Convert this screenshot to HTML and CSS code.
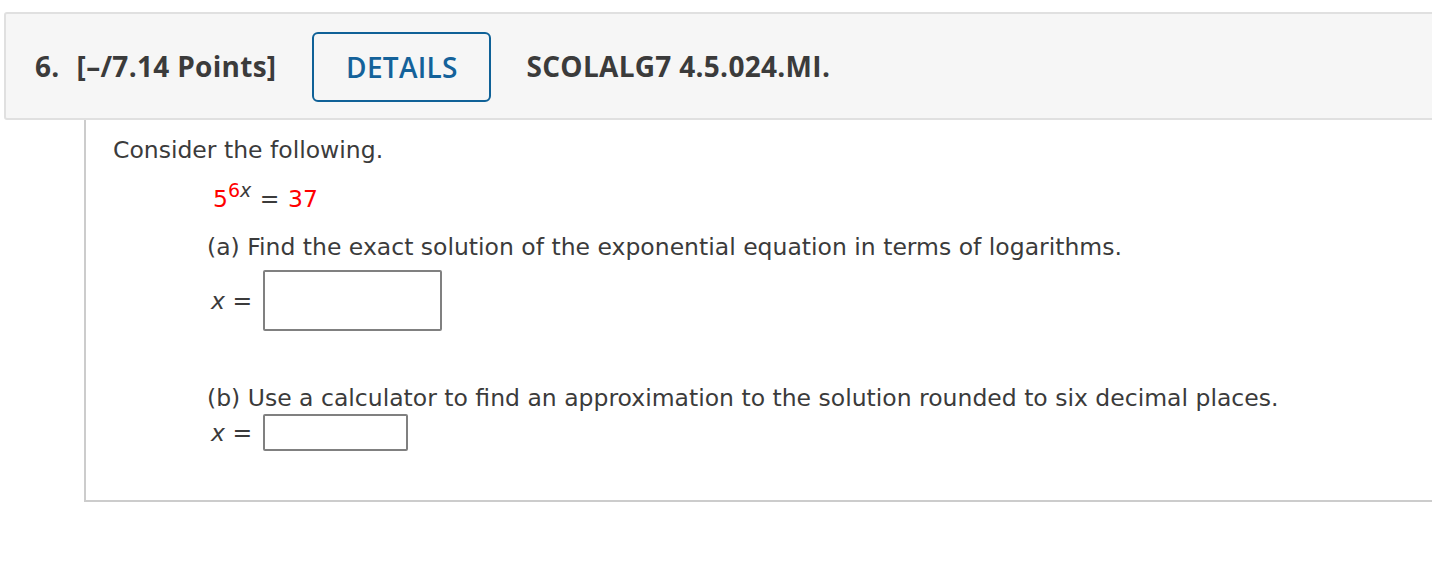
FILE: index.html
```html
<!DOCTYPE html>
<html>
<head>
<meta charset="utf-8">
<link rel="stylesheet" href="styles.css">
</head>
<body>
<div class="page">
  <div class="qhead">
    <span class="qnum">6.</span>
    <span class="qpoints">[–/7.14 Points]</span>
    <button class="details">DETAILS</button>
    <span class="qid">SCOLALG7 4.5.024.MI.</span>
  </div>
  <div class="qbody">
    <p class="intro">Consider the following.</p>
    <p class="eq"><span class="red">5</span><sup><span class="red">6</span><i class="var">x</i></sup> <span class="op">=</span> <span class="red">37</span></p>
    <p class="part">(a) Find the exact solution of the exponential equation in terms of logarithms.</p>
    <div class="answer answer-a"><span class="lbl"><i>x</i> =</span><span class="box box-big"></span></div>
    <p class="part part-b">(b) Use a calculator to find an approximation to the solution rounded to six decimal places.</p>
    <div class="answer answer-b"><span class="lbl"><i>x</i> =</span><span class="box box-small"></span></div>
  </div>
</div>
</body>
</html>
```

FILE: styles.css
```css
html, body {
  margin: 0;
  padding: 0;
  background: #ffffff;
}
.page {
  overflow: hidden;
  padding-top: 12px;
  height: 556px;
}
.qhead {
  margin-left: 4px;
  margin-right: -20px;
  height: 104px;
  border: 2px solid #e0e0e0;
  border-radius: 3px;
  background: #f6f6f6;
  display: flex;
  align-items: center;
  font-family: "Open Sans", sans-serif;
  font-weight: 700;
  color: #3b3b3b;
  font-size: 28px;
  letter-spacing: 0.3px;
}
.qnum {
  margin-left: 29px;
}
.qpoints {
  margin-left: 17px;
}
.details {
  margin-left: 36px;
  width: 179px;
  height: 70px;
  margin-top: 1px;
  border: 2px solid #0f6197;
  border-radius: 6px;
  background: #f6f6f6;
  color: #14629a;
  font-family: "Open Sans", sans-serif;
  font-weight: 600;
  font-size: 28px;
  letter-spacing: 0.3px;
  padding: 0;
}
.qid {
  margin-left: 35px;
}
.qbody {
  margin-left: 84px;
  margin-right: -20px;
  height: 380px;
  border-left: 2px solid #cccccc;
  border-bottom: 2px solid #cccccc;
  font-family: "DejaVu Sans", Verdana, sans-serif;
  font-size: 23.5px;
  color: #3b3b3b;
  padding-left: 27px;
}
.qbody p {
  margin: 0;
}
.intro {
  padding-top: 17px;
  line-height: 26px;
}
.eq {
  margin-left: 100px !important;
  margin-top: 23px !important;
  line-height: 26px;
}
.red {
  color: #ff0000;
}
.eq sup {
  font-size: 19px;
  line-height: 0;
  vertical-align: 10px;
}
.var {
  color: #3b3b3b;
}
.op {
  color: #3b3b3b;
  margin: 0 1px;
}
.part {
  margin-left: 94px !important;
  margin-top: 22px !important;
  line-height: 26px;
}
.answer {
  margin-left: 98px;
  display: flex;
  align-items: center;
}
.answer-a {
  margin-top: 10px;
}
.lbl {
  width: 52px;
}
.box {
  display: block;
  border: 2px solid #808080;
  border-radius: 2px;
  box-sizing: border-box;
  background: #ffffff;
}
.box-big {
  width: 179px;
  height: 61px;
}
.box-small {
  width: 145px;
  height: 37px;
}
.part-b {
  margin-top: 54px !important;
}
.answer-b {
  margin-top: 3px;
}
```
